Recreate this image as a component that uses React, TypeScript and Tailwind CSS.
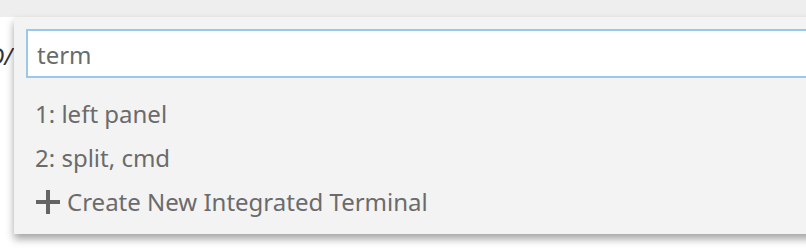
export default function App() {
  const rows = ['1: left panel', '2: split, cmd']

  return (
    <div className="relative w-[806px] h-[248px] overflow-hidden bg-white font-['Noto_Sans',sans-serif]">
      {/* title strip */}
      <div className="h-[17px] bg-[#eeeeee]" />

      {/* editor text peeking out behind the widget */}
      <span className="absolute left-[-11px] top-[39px] text-[23px] italic text-[#333333]">D/</span>

      {/* quick open widget */}
      <div className="absolute left-[14px] top-[17px] w-[830px] h-[217px] bg-[#f3f3f3] shadow-[0_5px_8px_rgba(0,0,0,0.36)]">
        <div className="pl-[12px] pt-[12px]">
          <div className="h-[49px] border-2 border-[#98c9ed] bg-white flex items-center pl-[9px] pt-[3px]">
            <span className="text-[24px] text-[#6b6b6b] leading-none">term</span>
          </div>
        </div>

        <div className="mt-[14px] flex flex-col">
          {rows.map((r) => (
            <div key={r} className="h-[44px] flex items-center pl-[21px] text-[24px] text-[#6b6b6b]">
              {r}
            </div>
          ))}
          <div className="h-[44px] flex items-center pl-[22px] text-[24px] text-[#6b6b6b]">
            <svg width="24" height="24" viewBox="0 0 24 24" className="mr-[7px]">
              <path d="M12 0v24M0 12h24" stroke="#646464" strokeWidth="4" />
            </svg>
            Create New Integrated Terminal
          </div>
        </div>
      </div>
    </div>
  )
}
